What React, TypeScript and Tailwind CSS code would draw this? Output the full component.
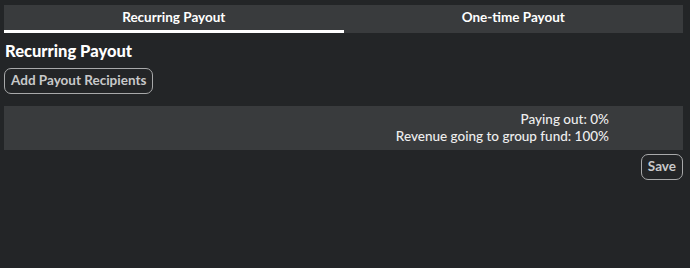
export default function App() {
  return (
    <div
      className="w-[690px] h-[268px] bg-[#232527] text-white px-1 pt-[5px]"
      style={{ fontFamily: 'Lato, "Open Sans", "Liberation Sans", sans-serif' }}
    >
      {/* Tabs */}
      <div className="flex h-[28px] bg-[#393b3d] w-[679px]">
        <button className="flex-1 border-b-[3px] border-white text-[13.5px] font-bold text-white leading-none pt-[1px]">
          Recurring Payout
        </button>
        <button className="flex-1 text-[13.5px] font-bold text-white leading-none pb-[2px]">
          One-time Payout
        </button>
      </div>

      <h2 className="mt-[8px] pl-px text-[16.5px] font-black leading-[20px]">Recurring Payout</h2>

      <button className="mt-[7px] h-[26px] px-[6px] rounded-[7px] border border-[#a8a9aa] text-[13.5px] font-bold text-[#c8c9ca] leading-none">
        Add Payout Recipients
      </button>

      {/* Summary */}
      <div className="mt-[12px] h-[44px] w-[679px] bg-[#393b3d] flex flex-col items-end justify-center pr-[74px] text-[13.5px] font-medium text-[#eeeeee] leading-[17px]">
        <span>Paying out: 0%</span>
        <span>Revenue going to group fund: 100%</span>
      </div>

      <div className="flex justify-end w-[679px] mt-[4px]">
        <button className="h-[26px] px-[6px] rounded-[7px] border border-[#a8a9aa] text-[13.5px] font-bold text-[#c8c9ca] leading-none">
          Save
        </button>
      </div>
    </div>
  );
}
